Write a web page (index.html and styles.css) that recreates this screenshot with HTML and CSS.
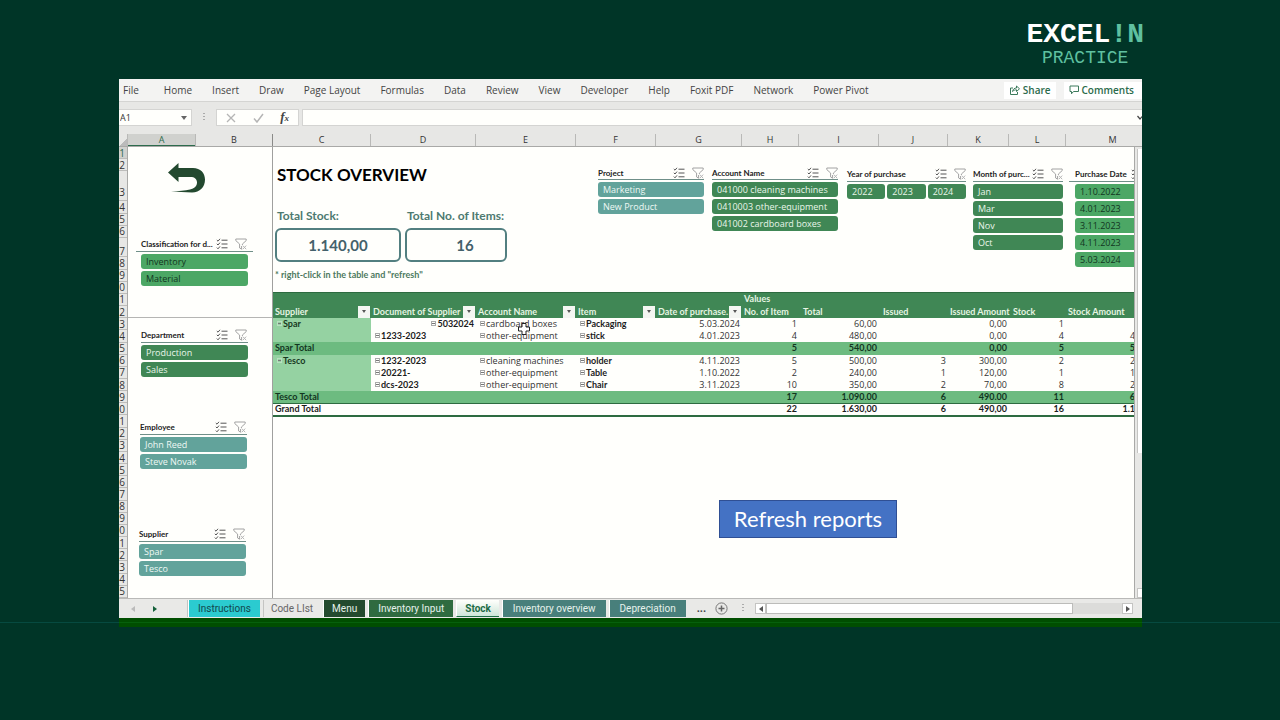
FILE: index.html
```html
<!DOCTYPE html>
<html lang="en">
<head>
<meta charset="utf-8">
<title>Excel in Practice – Stock overview</title>
<link rel="stylesheet" href="styles.css">
</head>
<body>
<svg class="symbols" aria-hidden="true">
  <symbol id="multi" viewBox="0 0 12 12"><path d="M.8 2l1.200 1.200L4 .8M.8 5.800L2 7l2-2.400M.8 9.600L2 10.800l2-2.400M5.500 2.200H11.500M5.500 6H11.500M5.500 9.800H11.500" fill="none" stroke="#555" stroke-width="1"/></symbol>
  <symbol id="clear" viewBox="0 0 12 12"><path d="M.8 1h10.400v1.600L7.400 6v1M.8 1v1.600L4.600 6v4l2 1.200V8" fill="none" stroke="#a2a2a2" stroke-width="1"/><path d="M7.800 7.600l3.400 3.600M11.200 7.600l-3.400 3.600" stroke="#b5b5b5" stroke-width="1"/></symbol>
</svg>

<header class="brand">
  <div class="brand-box">
    <div class="brand-main">EXCEL<span>!N</span></div>
    <div class="brand-sub">PRACTICE</div>
  </div>
</header>

<main class="window">
  <nav class="ribbon">
    <div class="menu">
      <button>File</button><button>Home</button><button>Insert</button><button>Draw</button><button>Page Layout</button><button>Formulas</button><button>Data</button><button>Review</button><button>View</button><button>Developer</button><button>Help</button><button>Foxit PDF</button><button>Network</button><button>Power Pivot</button>
    </div>
    <div class="actions">
      <button class="action"><svg width="11" height="10" viewBox="0 0 11 10"><path d="M4 3H1.500v6.500h7V7M3.500 6.500C4 4 5.500 3 7.500 3V1l3 2.800-3 2.700V4.800C6 4.800 4.700 5.300 3.500 6.500z" fill="none" stroke="#3c7a5c"/></svg>Share</button>
      <button class="action"><svg width="10" height="10" viewBox="0 0 10 10"><path d="M1 1h8.500v5.500H4.500L2.500 8.800V6.500H1z" fill="none" stroke="#3c7a5c"/></svg>Comments</button>
    </div>
  </nav>

  <div class="formula">
    <div class="name-box"><input type="text" value="A1" aria-label="Name box"><span class="caret"></span></div>
    <span class="grip"></span>
    <div class="fx">
      <button aria-label="Cancel"><svg width="10" height="10" viewBox="0 0 10 10"><path d="M1 1l8 8M9 1L1 9" stroke="#b5b5b5" stroke-width="1.300"/></svg></button>
      <button aria-label="Enter"><svg width="11" height="10" viewBox="0 0 11 10"><path d="M1 5.500L4 9l6-8" fill="none" stroke="#b5b5b5" stroke-width="1.500"/></svg></button>
      <button class="fn" aria-label="Insert function">f<small>x</small></button>
    </div>
    <div class="fx-field"><input type="text" aria-label="Formula bar"><svg width="5" height="5" viewBox="0 0 5 5"><path d="M.5 1L3 4l2-2.500" fill="none" stroke="#444" stroke-width="1.200"/></svg></div>
  </div>

  <div class="columns">
    <span class="corner"></span>
    <span class="ca on">A</span><span class="cb">B</span><span class="cc">C</span><span class="cd">D</span><span class="ce">E</span><span class="cf">F</span><span class="cg">G</span><span class="ch">H</span><span class="ci">I</span><span class="cj">J</span><span class="ck">K</span><span class="cl">L</span><span class="cm">M</span>
  </div>

  <div class="sheet">
    <div class="rows">
      <span class="on">1</span><span>2</span><span class="tall">3</span><span>4</span><span>5</span><span>6</span><span class="mid">7</span><span>8</span><span>9</span><span>0</span><span>1</span><span>2</span><span>3</span><span>4</span><span>5</span><span>6</span><span>7</span><span>8</span><span>9</span><span>0</span><span>1</span><span>2</span><span>3</span><span>4</span><span>5</span><span>6</span><span>7</span><span>8</span><span>9</span><span>0</span><span>1</span><span>2</span><span>3</span><span>4</span><span>5</span>
    </div>

    <aside class="side">
      <div class="frozen">
        <button class="back" aria-label="Back"><svg width="40" height="32" viewBox="0 0 40 32"><path d="M1 10.500L11.500 1v5H26c7.500 0 12 5 12 11.500C38 25 33 30.500 25 30.500L4 29.500c8-.2 14-1 19-2 4.500-.8 7-3.500 7-7 0-3.500-2.500-5.500-6.500-5.500h-12v5z" fill="#23492f"/></svg></button>
        <section class="slicer wide lime">
          <header><h2>Classification for d...</h2><svg><use href="#multi"/></svg><svg><use href="#clear"/></svg></header>
          <button>Inventory</button><button>Material</button>
        </section>
      </div>
      <section class="slicer green dept">
        <header><h2>Department</h2><svg><use href="#multi"/></svg><svg><use href="#clear"/></svg></header>
        <button>Production</button><button>Sales</button>
      </section>
      <section class="slicer teal empl">
        <header><h2>Employee</h2><svg><use href="#multi"/></svg><svg><use href="#clear"/></svg></header>
        <button>John Reed</button><button>Steve Novak</button>
      </section>
      <section class="slicer teal supp">
        <header><h2>Supplier</h2><svg><use href="#multi"/></svg><svg><use href="#clear"/></svg></header>
        <button>Spar</button><button>Tesco</button>
      </section>
    </aside>

    <div class="content">
      <div class="top">
        <div class="summary">
          <h1>STOCK OVERVIEW</h1>
          <div class="totals">
            <div class="total stock"><h3>Total Stock:</h3><output>1.140,00</output></div>
            <div class="total items"><h3>Total No. of Items:</h3><output>16</output></div>
          </div>
          <p>* right-click in the table and "refresh"</p>
        </div>
        <section class="slicer teal project">
          <header><h2>Project</h2><svg><use href="#multi"/></svg><svg><use href="#clear"/></svg></header>
          <button>Marketing</button><button>New Product</button>
        </section>
        <section class="slicer green account">
          <header><h2>Account Name</h2><svg><use href="#multi"/></svg><svg><use href="#clear"/></svg></header>
          <button>041000 cleaning machines</button><button>0410003 other-equipment</button><button>041002 cardboard boxes</button>
        </section>
        <section class="slicer green year low">
          <header><h2>Year of purchase</h2><svg><use href="#multi"/></svg><svg><use href="#clear"/></svg></header>
          <div class="years"><button>2022</button><button>2023</button><button>2024</button></div>
        </section>
        <section class="slicer green month low">
          <header><h2>Month of purc...</h2><svg><use href="#multi"/></svg><svg><use href="#clear"/></svg></header>
          <button>Jan</button><button>Mar</button><button>Nov</button><button>Oct</button>
        </section>
        <section class="slicer lime date low">
          <header><h2>Purchase Date</h2><svg><use href="#multi"/></svg><svg><use href="#clear"/></svg></header>
          <button>1.10.2022</button><button>4.01.2023</button><button>3.11.2023</button><button>4.11.2023</button><button>5.03.2024</button>
        </section>
      </div>

      <div class="pivot-wrap">
        <table class="pivot">
          <colgroup><col class="cc"><col class="cd"><col class="ce"><col class="cf"><col class="cg"><col class="ch"><col class="ci"><col class="cj"><col class="ck"><col class="cl"><col class="cm"></colgroup>
          <thead>
            <tr><th></th><th></th><th></th><th></th><th></th><th>Values</th><th></th><th></th><th></th><th></th><th></th></tr>
            <tr>
              <th><div>Supplier<button aria-label="Filter supplier"></button></div></th>
              <th><div>Document of Supplier<button aria-label="Filter document"></button></div></th>
              <th><div>Account Name<button aria-label="Filter account"></button></div></th>
              <th><div>Item<button aria-label="Filter item"></button></div></th>
              <th><div>Date of purchase.<button aria-label="Filter date"></button></div></th>
              <th>No. of Item</th><th class="in">Total</th><th class="in">Issued</th><th>Issued Amount</th><th class="in">Stock</th><th>Stock Amount</th>
            </tr>
          </thead>
          <tbody>
            <tr><td class="sup"><i class="minus"></i>Spar</td><td class="num b"><i></i>5032024</td><td><i></i>cardboard boxes</td><td class="b"><i></i>Packaging</td><td class="num">5.03.2024</td><td class="num">1</td><td class="num">60,00</td><td></td><td class="num">0,00</td><td class="num">1</td><td class="num"></td></tr>
            <tr><td class="sup"></td><td class="b"><i></i>1233-2023</td><td><i></i>other-equipment</td><td class="b"><i></i>stick</td><td class="num">4.01.2023</td><td class="num">4</td><td class="num">480,00</td><td></td><td class="num">0,00</td><td class="num">4</td><td class="num">480,00</td></tr>
            <tr class="sub"><td colspan="5">Spar Total</td><td class="num">5</td><td class="num">540,00</td><td></td><td class="num">0,00</td><td class="num">5</td><td class="num">540,00</td></tr>
            <tr><td class="sup"><i class="minus"></i>Tesco</td><td class="b"><i></i>1232-2023</td><td><i></i>cleaning machines</td><td class="b"><i></i>holder</td><td class="num">4.11.2023</td><td class="num">5</td><td class="num">500,00</td><td class="num">3</td><td class="num">300,00</td><td class="num">2</td><td class="num">200,00</td></tr>
            <tr><td class="sup"></td><td class="b"><i></i>20221-</td><td><i></i>other-equipment</td><td class="b"><i></i>Table</td><td class="num">1.10.2022</td><td class="num">2</td><td class="num">240,00</td><td class="num">1</td><td class="num">120,00</td><td class="num">1</td><td class="num">120,00</td></tr>
            <tr><td class="sup"></td><td class="b"><i></i>dcs-2023</td><td><i></i>other-equipment</td><td class="b"><i></i>Chair</td><td class="num">3.11.2023</td><td class="num">10</td><td class="num">350,00</td><td class="num">2</td><td class="num">70,00</td><td class="num">8</td><td class="num">280,00</td></tr>
            <tr class="sub"><td colspan="5">Tesco Total</td><td class="num">17</td><td class="num">1.090.00</td><td class="num">6</td><td class="num">490.00</td><td class="num">11</td><td class="num">600,00</td></tr>
            <tr class="grand"><td colspan="5">Grand Total</td><td class="num">22</td><td class="num">1.630,00</td><td class="num">6</td><td class="num">490,00</td><td class="num">16</td><td class="num">1.140,00</td></tr>
          </tbody>
        </table>
        <svg class="cursor" width="12" height="12" viewBox="0 0 12 12"><path d="M4 .5h4V4h3.500v4H8v3.500H4V8H.5V4H4z" fill="#fff" stroke="#222"/></svg>
      </div>

      <button class="refresh">Refresh reports</button>
    </div>
    <div class="vscroll"><span></span></div>
  </div>

  <footer class="tabs">
    <div class="nav"><button aria-label="Previous sheet"><svg width="4" height="6" viewBox="0 0 4 6"><path d="M4 0v6L0 3z" fill="#bbb"/></svg></button><button aria-label="Next sheet"><svg width="4" height="6" viewBox="0 0 4 6"><path d="M0 0v6l4-3z" fill="#14603a"/></svg></button></div>
    <button class="tab cyan">Instructions</button>
    <button class="tab plain">Code LIst</button>
    <button class="tab dark">Menu</button>
    <button class="tab forest">Inventory Input</button>
    <button class="tab active">Stock</button>
    <button class="tab slate">Inventory overview</button>
    <button class="tab slate">Depreciation</button>
    <button class="more">...</button>
    <button class="add" aria-label="New sheet"><svg width="13" height="13" viewBox="0 0 13 13"><circle cx="6.500" cy="6.500" r="5.600" fill="none" stroke="#777"/><path d="M6.500 3.500v6M3.500 6.500h6" stroke="#666" stroke-width="1.500"/></svg></button>
    <span class="grip"></span>
    <div class="hscroll">
      <button aria-label="Scroll left"><svg width="4" height="6" viewBox="0 0 4 6"><path d="M4 0v6L0 3z" fill="#555"/></svg></button>
      <span class="thumb"></span>
      <button aria-label="Scroll right"><svg width="4" height="6" viewBox="0 0 4 6"><path d="M0 0v6l4-3z" fill="#555"/></svg></button>
    </div>
  </footer>
</main>
<div class="band"><div></div></div>
</body>
</html>
```

FILE: styles.css
```css
* { box-sizing: border-box; }
body { margin: 0; min-height: 100vh; background: #003527; font-family: "Open Sans", "Noto Sans", sans-serif; font-size: 10px; color: #333; overflow-x: hidden; }
button, input { font: inherit; color: inherit; border: 0; padding: 0; margin: 0; background: none; }
h1, h2, h3, p { margin: 0; }
svg { display: block; flex: none; }
.symbols { position: absolute; width: 0; height: 0; }

.brand { height: 79px; padding: 20px 136px 0 0; display: flex; justify-content: flex-end; }
.brand-box { font-family: "Liberation Mono", monospace; text-align: center; }
.brand-main { font-size: 28px; line-height: 29px; font-weight: 700; color: #fff; }
.brand-main span { color: #5fc0a0; }
.brand-sub { font-size: 18px; line-height: 18px; color: #5fc0a0; }

.window { margin: 0 138px 0 119px; background: #e7e7e5; overflow: hidden; }
.ribbon { height: 23px; display: flex; justify-content: space-between; background: #f3f3f2; border-bottom: 1px solid #d4d4d2; }
.menu { display: flex; gap: 20px; padding-left: 4px; color: #444; }
.menu button { white-space: nowrap; }
.menu button:first-child { margin-right: 5px; }
.actions { display: flex; gap: 8px; align-items: center; flex: none; }
.action { display: flex; align-items: center; gap: 3px; height: 17px; padding: 0 5px; background: #fff; color: #2c6b4c; font-weight: 600; }
.action:last-child { padding-right: 8px; }

.formula { height: 32px; padding-top: 7px; display: flex; align-items: flex-start; background: #e7e7e5; }
.name-box { width: 73px; height: 17px; display: flex; align-items: center; background: #fffffc; border: 1px solid #d4d4d2; border-left: 0; font-size: 9px; }
.name-box input { width: 62px; padding-left: 1px; }
.caret { border: 3px solid transparent; border-top: 4px solid #666; border-bottom: 0; }
.grip { flex: none; width: 2px; height: 9px; margin: 4px 11px 0; background: repeating-linear-gradient(#aaa 0 1px, transparent 1px 3px); }
.fx { width: 83px; height: 17px; display: flex; align-items: center; justify-content: space-between; padding: 0 9px; background: #fffffc; border: 1px solid #d4d4d2; }
.fn { font: italic 700 13px/14px "Liberation Serif", serif; color: #444; }
.fn small { font-size: 9px; }
.fx-field { flex: 1; height: 17px; margin-left: 3px; display: flex; align-items: center; background: #fffffc; border: 1px solid #d4d4d2; border-right: 0; }
.fx-field input { flex: 1; min-width: 0; }

.columns { height: 13px; display: flex; overflow: hidden; border-bottom: 1px solid #a9a9a7; font-size: 9px; line-height: 12px; text-align: center; }
.columns span { flex: none; border-right: 1px solid #b9b9b7; }
.columns .corner { width: 9px; background: linear-gradient(135deg, transparent 60%, #bbb 60%); }
.columns .on { background: #d0d1ce; color: #2c6b4c; box-shadow: inset 0 -1px #2c6b4c; }
.columns .cb { border-right-color: #8a8a88; }
.ca { width: 68px; }
.cb { width: 77px; }
.cc { width: 98px; }
.cd { width: 105px; }
.ce { width: 100px; }
.cf { width: 80px; }
.cg { width: 86px; }
.ch { width: 57px; }
.ci { width: 80px; }
.cj { width: 69px; }
.ck { width: 61px; }
.cl { width: 57px; }
.cm { width: 94px; }

.sheet { display: flex; height: 452px; background: #fffffc; border-bottom: 1px solid #b9b9b7; }
.rows { flex: none; width: 9px; display: flex; flex-direction: column; background: #e7e7e5; border-right: 1px solid #a9a9a7; font-size: 10px; line-height: 10px; }
.rows span { flex: 12 0 0; min-height: 0; display: flex; align-items: center; justify-content: flex-end; padding-right: 2px; border-bottom: 1px solid #bcbcba; }
.rows .tall { flex-grow: 28; align-items: flex-end; padding-bottom: 3px; }
.rows .mid { flex-grow: 20; align-items: flex-end; }
.rows .on { background: #d0d1ce; color: #2c6b4c; }

.side { flex: none; width: 145px; border-right: 1px solid #a0a09e; }
.frozen { height: 171px; border-bottom: 1px solid #b5b5b3; }
.back { display: block; margin-left: 39px; padding-top: 15px; }

.slicer { flex: none; display: flex; flex-direction: column; gap: 2px; }
.slicer header { display: flex; align-items: center; gap: 7px; height: 15px; padding-right: 1px; border-bottom: 1px solid #6f8f88; }
.slicer h2 { flex: 1; min-width: 0; white-space: nowrap; font: 700 8px/12px Lato, "Open Sans", sans-serif; color: #222; }
.slicer header svg { width: 12px; height: 12px; }
.slicer button { height: 15px; padding-left: 5px; border-radius: 3px; text-align: left; font-size: 9px; line-height: 13px; white-space: nowrap; }
.lime button { background: #4ca765; color: #12351f; }
.green button { background: #408755; color: #eaf6ea; }
.teal button { background: #62a39b; color: #eef8f4; }
.side .slicer { width: 107px; }
.side .wide { width: 117px; margin: 43px 0 0 8px; }
.side .wide header { padding: 0 6px 0 5px; }
.side .wide button { margin: 0 5px; }
.side .dept { margin: 10px 0 0 13px; }
.side .empl { margin: 43px 0 0 12px; }
.side .supp { margin: 58px 0 0 11px; }

.content { flex: 1; min-width: 0; overflow: hidden; border-right: 1px solid #a9a9a7; }
.top { height: 145px; display: flex; align-items: flex-start; padding-top: 19px; }
.top .slicer header { height: 14px; padding-right: 0; }
.top .low header { height: 15px; }
.summary { flex: none; width: 325px; padding-left: 2px; font-family: Lato, "Open Sans", sans-serif; font-weight: 700; color: #4d7a70; }
.summary h1 { padding-left: 2px; font-size: 17px; line-height: 18px; color: #000; }
.totals { display: flex; gap: 4px; margin-top: 24px; }
.total { display: flex; flex-direction: column; gap: 4px; }
.total h3 { padding-left: 2px; font-size: 12px; line-height: 16px; white-space: nowrap; }
.total output { height: 34px; display: flex; align-items: center; justify-content: center; border: 2px solid #527f80; border-radius: 6px; font-size: 15px; color: #44616b; }
.stock { width: 126px; }
.items { width: 102px; }
.items output { padding-left: 18px; }
.summary p { margin-top: 7px; font-size: 9px; line-height: 12px; color: #4d7a5f; }
.project { width: 106px; margin-right: 8px; }
.account { width: 126px; margin-right: 9px; }
.low { margin-top: 1px; }
.year { width: 119px; margin-right: 7px; }
.years { display: grid; grid-template-columns: repeat(3, 1fr); gap: 2px; }
.month { width: 90px; margin-right: 6px; }
.date { width: 96px; }
.date header { gap: 4px; padding-left: 6px; }
.date h2 { flex: none; }
.date button { margin-left: 6px; }

.pivot-wrap { position: relative; }
.pivot { table-layout: fixed; width: 887px; border-collapse: collapse; font-size: 9px; line-height: 10px; color: #333; }
.pivot tr { height: 12px; }
.pivot th, .pivot td { padding: 0 2px; text-align: left; white-space: nowrap; }
.pivot th { background: #408755; color: #e6f5e3; font-family: Lato, "Open Sans", sans-serif; font-weight: 700; }
.pivot thead tr:first-child { height: 13px; border-top: 1px solid #2d6b40; }
.pivot th div { display: flex; align-items: center; justify-content: space-between; height: 12px; margin-right: -1px; }
.pivot th button { flex: none; width: 12px; height: 12px; background: #f4f6f2; display: flex; align-items: center; justify-content: center; }
.pivot th button::after { content: ""; border: 2px solid transparent; border-top: 3px solid #555; border-bottom: 0; }
.pivot th.in { padding-left: 4px; }
.pivot .num { text-align: right; }
.pivot .b, .pivot .sup, .pivot .sub, .pivot .grand { font-family: Lato, "Open Sans", sans-serif; font-weight: 700; color: #1c1c1c; }
.pivot .sup { background: #95d2a2; color: #17391f; }
.pivot .sub { height: 13px; background: #6dbb80; color: #12351f; }
.pivot .grand { border-top: 1px solid #2d6b40; border-bottom: 2px solid #2d6b40; }
.pivot i { display: inline-block; width: 5px; height: 5px; margin: 0 1px 1px 2px; border: 1px solid #aaa; background: linear-gradient(#777, #777) center / 3px 1px no-repeat; }
.pivot .minus { border-color: #b9dfc0; }
.cursor { position: absolute; left: 245px; top: 31px; }

.refresh { display: block; width: 178px; height: 38px; margin: 83px 0 0 446px; background: #4472c4; border: 1px solid #2f4f94; color: #fff; font-family: Lato, "Open Sans", sans-serif; font-size: 22px; line-height: 30px; }

.vscroll { flex: none; width: 7px; padding: 2px 0 0 2px; display: flex; flex-direction: column; justify-content: flex-end; background: #e7e7e5; }
.vscroll::before { content: ""; height: 304px; margin-bottom: auto; background: #fff; border-left: 1px solid #c4c4c2; }
.vscroll span { height: 10px; background: #fff; border: 1px solid #c4c4c2; border-right: 0; }

.tabs { height: 19px; display: flex; align-items: stretch; padding: 1px 9px 1px 0; background: #e9e9e7; white-space: nowrap; font-family: Roboto, "Open Sans", sans-serif; }
.nav { width: 69px; flex: none; display: flex; align-items: center; gap: 18px; padding-left: 12px; border-right: 1px solid #c4c4c2; }
.tab { flex: none; padding: 0 9px; margin-right: 3px; color: #e6f2ec; border-left: 1px solid #fff; }
.cyan { background: #2bcbd0; color: #12474c; }
.plain { color: #666; border-color: #c4c4c2; padding: 0 7px; }
.dark { background: #234a2e; padding: 0 8px; }
.forest { background: #2f6b40; }
.active { background: linear-gradient(#fffffc, #cde6d8); color: #1d6b45; font-weight: 700; border-bottom: 1px solid #1d6b45; padding: 0 8px; }
.slate { background: #487f7b; padding: 0 10px; }
.more { margin-left: 8px; font-weight: 700; font-size: 11px; color: #444; }
.add { display: flex; align-items: center; margin-left: 9px; }
.tabs .grip { margin-left: 14px; }
.hscroll { flex: 1; display: flex; align-items: stretch; margin: 3px 0; background: #dcdcda; }
.hscroll button { width: 11px; background: #fff; border: 1px solid #c4c4c2; display: flex; align-items: center; justify-content: center; }
.thumb { width: 307px; margin-right: auto; background: #fff; border: 1px solid #bcbcba; }

.band { background: linear-gradient(transparent 4px, #064a40 4px 5px, transparent 5px); }
.band div { height: 9px; margin: 0 138px 0 119px; background: linear-gradient(#004e00 4px, #06600c 4px 5px, #004e00 5px); }
```
